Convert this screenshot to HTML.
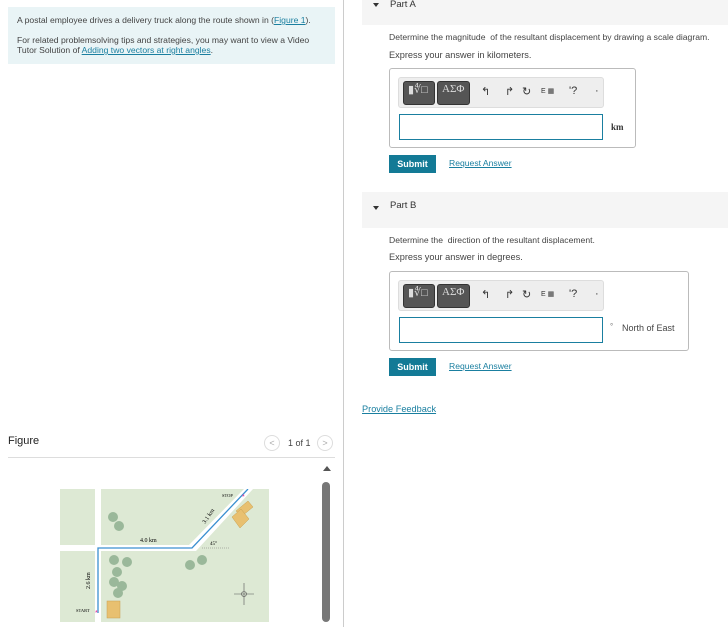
<!DOCTYPE html>
<html><head><meta charset="utf-8"><style>
*{margin:0;padding:0;box-sizing:border-box}
body{width:728px;height:627px;overflow:hidden;background:#fff;font-family:"Liberation Sans",Arial,sans-serif;color:#333;position:relative;font-size:8px}
.a{position:absolute;white-space:nowrap}
a,.lnk{color:#1a7fa0;text-decoration:underline}
.tb{position:absolute;left:8px;width:206px;height:31px;background:#eee;border:1px solid #ddd;border-radius:3px}
.btn{position:absolute;top:3px;height:24px;background:#555;border:1px solid #333;border-radius:3px;color:#ddd;font-family:"Liberation Serif",serif;font-size:11px;padding:1px 4px}
.ic{position:absolute;top:7px;font-size:11px;color:#333}
.inp{position:absolute;left:9px;width:204px;height:26px;border:1px solid #1a7fa0;background:#fff}
.sub{position:absolute;width:47px;height:18px;background:#137a96;color:#fff;font-weight:bold;font-size:9px;text-align:center;line-height:18px}
.band{position:absolute;left:362px;width:366px;background:#f5f5f5}
.tri{position:absolute;width:0;height:0;border-left:3px solid transparent;border-right:3px solid transparent;border-top:4px solid #333}
</style></head><body>
<div class="a" style="left:8px;top:7px;width:327px;height:57px;background:#e9f4f6"></div>
<div class="a" style="left:17px;top:15px;font-size:8.6px;color:#444">A postal employee drives a delivery truck along the route shown in (<a>Figure 1</a>).</div>
<div class="a" style="left:17px;top:35px;font-size:8.6px;color:#444;line-height:10px;white-space:normal;width:305px">For related problemsolving tips and strategies, you may want to view a Video Tutor Solution of <a>Adding two vectors at right angles</a>.</div>
<div class="a" style="left:343px;top:0;width:1px;height:627px;background:#ccc"></div>

<div class="a" style="left:8px;top:435px;font-size:11px;color:#222">Figure</div>
<div class="a" style="left:264px;top:435px;width:16px;height:16px;border:1px solid #ddd;border-radius:50%;color:#aaa;font-size:9px;text-align:center;line-height:14px">&lt;</div>
<div class="a" style="left:288px;top:438px;font-size:9px;color:#444">1 of 1</div>
<div class="a" style="left:317px;top:435px;width:16px;height:16px;border:1px solid #ddd;border-radius:50%;color:#aaa;font-size:9px;text-align:center;line-height:14px">&gt;</div>
<div class="a" style="left:8px;top:457px;width:327px;height:1px;background:#ddd"></div>
<div class="a" style="left:323px;top:466px;width:0;height:0;border-left:4px solid transparent;border-right:4px solid transparent;border-bottom:5px solid #555"></div>
<div class="a" style="left:322px;top:482px;width:8px;height:140px;background:#777;border-radius:4px"></div>

<svg class="a" style="left:60px;top:489px" width="209" height="133" viewBox="0 0 209 133">
<rect width="209" height="133" fill="#dde9d4"/>
<rect x="35" y="0" width="6" height="133" fill="#fff"/>
<polygon points="0,56 129,56 184,0 193,0 136,62 0,62" fill="#fff"/>
<path d="M38 124 L38 59 L132 59 L188 0" fill="none" stroke="#3a8fd0" stroke-width="1.3"/>
<g fill="#9ab89a"><circle cx="53" cy="28" r="5"/><circle cx="59" cy="37" r="5"/><circle cx="54" cy="71" r="5"/><circle cx="67" cy="73" r="5"/><circle cx="57" cy="83" r="5"/><circle cx="54" cy="93" r="5"/><circle cx="62" cy="97" r="5"/><circle cx="58" cy="104" r="5"/><circle cx="130" cy="76" r="5"/><circle cx="142" cy="71" r="5"/></g>
<g fill="#e8c070" stroke="#c9a050" stroke-width=".5"><rect x="47" y="112" width="13" height="17"/><polygon points="176,22 188,12 193,18 182,27"/><polygon points="172,28 181,20 189,30 180,39"/></g>
<text x="80" y="53" font-size="6" font-family="Liberation Serif">4.0 km</text>
<text x="145" y="35" font-size="6" font-family="Liberation Serif" transform="rotate(-55 145 35)">3.1 km</text>
<text x="30" y="100" font-size="6" font-family="Liberation Serif" transform="rotate(-90 30 100)">2.6 km</text>
<text x="162" y="8" font-size="4.5" font-family="Liberation Serif">STOP</text>
<text x="16" y="123" font-size="4.5" font-family="Liberation Serif">START</text>
<text x="150" y="56" font-size="5" font-family="Liberation Serif">45°</text>
<line x1="142" y1="59" x2="170" y2="59" stroke="#777" stroke-width=".5" stroke-dasharray="1,1"/>
<text x="182" y="10" font-size="7" fill="#e0208a">*</text>
<text x="35" y="126" font-size="7" fill="#e0208a">*</text>
<g stroke="#555" stroke-width=".6"><line x1="184" y1="94" x2="184" y2="116"/><line x1="174" y1="105" x2="194" y2="105"/><circle cx="184" cy="105" r="2.5" fill="none"/></g>
</svg>

<div class="band" style="top:0;height:25px"></div>
<div class="tri" style="left:373px;top:3px"></div>
<div class="a" style="left:390px;top:-1px;font-size:9.5px;color:#333">Part A</div>
<div class="a" style="left:389px;top:32px;font-size:8.6px;color:#444">Determine the magnitude &nbsp;of the resultant displacement by drawing a scale diagram.</div>
<div class="a" style="left:389px;top:50px;font-size:9.2px;color:#444">Express your answer in kilometers.</div>
<div class="a" style="left:389px;top:68px;width:247px;height:80px;border:1px solid #bbb;border-radius:3px">
 <div class="tb" style="top:8px">
  <div class="btn" style="left:4px;width:32px">▮∜□</div><div class="btn" style="left:38px;width:33px">ΑΣΦ</div>
  <div class="ic" style="left:82px">↰</div><div class="ic" style="left:106px">↱</div><div class="ic" style="left:123px">↻</div><div class="ic" style="left:142px;font-size:7px;top:9px">E ▦</div><div class="ic" style="left:170px">'?</div><div class="ic" style="left:196px">·</div>
 </div>
 <div class="inp" style="top:45px"></div>
 <div class="a" style="left:221px;top:53px;font-family:'Liberation Serif',serif;font-size:9px;font-weight:bold">km</div>
</div>
<div class="sub" style="left:389px;top:155px">Submit</div>
<div class="a lnk" style="left:449px;top:158px;font-size:8.6px">Request Answer</div>

<div class="band" style="top:192px;height:36px"></div>
<div class="tri" style="left:373px;top:206px"></div>
<div class="a" style="left:390px;top:200px;font-size:9.5px;color:#333">Part B</div>
<div class="a" style="left:389px;top:235px;font-size:8.6px;color:#444">Determine the &nbsp;direction of the resultant displacement.</div>
<div class="a" style="left:389px;top:252px;font-size:9.2px;color:#444">Express your answer in degrees.</div>
<div class="a" style="left:389px;top:271px;width:300px;height:80px;border:1px solid #bbb;border-radius:3px">
 <div class="tb" style="top:8px">
  <div class="btn" style="left:4px;width:32px">▮∜□</div><div class="btn" style="left:38px;width:33px">ΑΣΦ</div>
  <div class="ic" style="left:82px">↰</div><div class="ic" style="left:106px">↱</div><div class="ic" style="left:123px">↻</div><div class="ic" style="left:142px;font-size:7px;top:9px">E ▦</div><div class="ic" style="left:170px">'?</div><div class="ic" style="left:196px">·</div>
 </div>
 <div class="inp" style="top:45px"></div>
 <div class="a" style="left:220px;top:50px;font-size:8px;color:#777">°</div>
 <div class="a" style="left:232px;top:51px;font-size:9px;color:#444">North of East</div>
</div>
<div class="sub" style="left:389px;top:358px">Submit</div>
<div class="a lnk" style="left:449px;top:361px;font-size:8.6px">Request Answer</div>
<div class="a lnk" style="left:362px;top:404px;font-size:9.2px">Provide Feedback</div>
</body></html>
